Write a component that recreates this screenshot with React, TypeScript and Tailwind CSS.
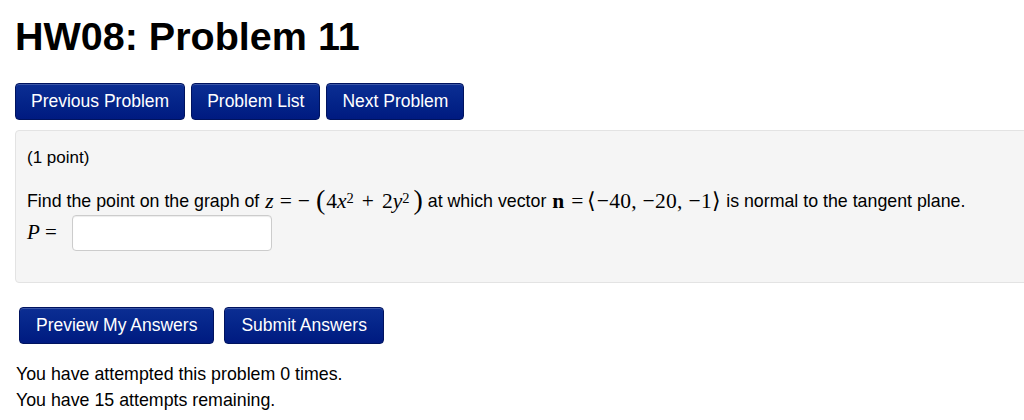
import React from "react";

const btnBase =
  "h-[37px] rounded-[4px] border border-[#00135f] bg-gradient-to-b from-[#0c2e93] to-[#001a80] text-[17.5px] text-white leading-none shadow-[inset_0_1px_0_rgba(255,255,255,0.2)]";
const btn = btnBase + " px-[15px]";
const btn2 = btnBase + " px-[16px]";

const serif = { fontFamily: '"Liberation Serif", "Times New Roman", serif' };

export default function App() {
  return (
    <div
      className="w-[1024px] h-[420px] overflow-hidden bg-white text-black"
      style={{ fontFamily: '"Liberation Sans", Arial, Helvetica, sans-serif' }}
    >
      <h1 className="pt-[15px] pl-[15px] text-[39.5px] font-bold leading-[42px]">
        HW08: Problem 11
      </h1>
      <div className="mt-[26px] ml-[15px] flex gap-[6px]">
        <button className={btn}>Previous Problem</button>
        <button className={btn}>Problem List</button>
        <button className={btn}>Next Problem</button>
      </div>
      <div className="mt-[10px] ml-[15px] h-[153px] w-[1030px] rounded-[4px] border border-[#e3e3e3] bg-[#f5f5f5] pl-[11px] pt-[16px] text-[17.8px]">
        <div className="leading-[22px] text-[17px]">(1 point)</div>
        <div className="mt-[20px] flex items-center h-[24px] whitespace-nowrap">
          <span>Find the point on the graph of&nbsp;</span>
          <span className="flex items-center text-[21.5px]" style={serif}>
            <i className="ml-[1px]">z</i>
            <span className="mx-[6px]">=</span>
            <span>−</span>
            <span className="ml-[6px] mr-[1px] text-[28px] font-light leading-none relative top-[-1px]">(</span>
            <span>4</span>
            <i>x</i>
            <sup className="text-[14.5px] relative top-[-3px]">2</sup>
            <span className="mx-[8px]">+</span>
            <span>2</span>
            <i>y</i>
            <sup className="text-[14.5px] relative top-[-3px]">2</sup>
            <span className="ml-[4px] text-[28px] font-light leading-none relative top-[-1px]">)</span>
          </span>
          <span>&nbsp;at which vector&nbsp;</span>
          <span className="flex items-center text-[21.5px]" style={serif}>
            <b className="ml-[1px]">n</b>
            <span className="ml-[7px] mr-[4px]">=</span>
            <span className="tracking-[0.3px]">⟨−40,&nbsp;−20,&nbsp;−1⟩</span>
          </span>
          <span>&nbsp;is normal to the tangent plane.</span>
        </div>
        <div className="mt-[2px] flex items-center">
          <span className="text-[21px]" style={serif}>
            <i>P</i> =
          </span>
          <input
            className="ml-[15px] h-[36px] w-[200px] rounded-[4px] border border-[#cccccc] bg-white shadow-[inset_0_1px_1px_rgba(0,0,0,0.075)]"
            type="text"
          />
        </div>
      </div>
      <div className="mt-[24px] ml-[19px] flex gap-[10px]">
        <button className={btn2}>Preview My Answers</button>
        <button className={btn2}>Submit Answers</button>
      </div>
      <div className="mt-[17px] ml-[16px] text-[17.8px] leading-[26px]">
        <div>You have attempted this problem 0 times.</div>
        <div>You have 15 attempts remaining.</div>
      </div>
    </div>
  );
}
